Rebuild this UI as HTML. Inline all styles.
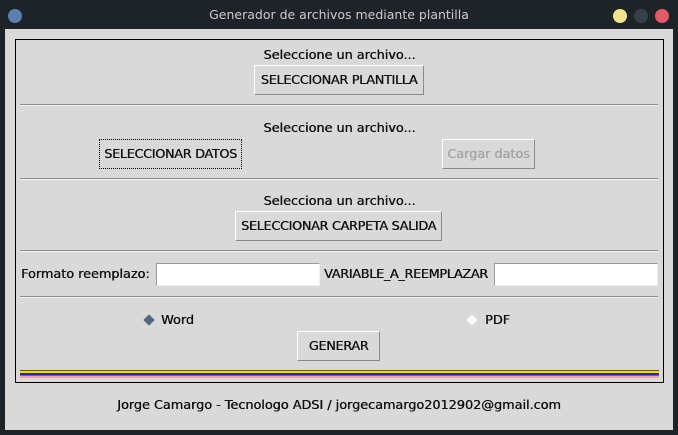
<!DOCTYPE html>
<html><head><meta charset="utf-8"><style>
*{margin:0;padding:0;box-sizing:border-box}
body{width:678px;height:435px;background:#1d2327;position:relative;overflow:hidden;font-family:"DejaVu Sans","Liberation Sans",sans-serif;font-size:12.8px;color:#111}
.a{position:absolute}
.t{position:absolute;white-space:nowrap;text-align:center;text-shadow:0.4px 0 0 #111}
.btn{position:absolute;background:#d9d9d9;border:1px solid;border-color:#fff #8a8a8a #8a8a8a #fff;display:flex;align-items:center;justify-content:center;white-space:nowrap;font-size:12.8px;letter-spacing:-0.3px;text-shadow:0.4px 0 0 #111}
.sep{position:absolute;left:20px;width:638px;height:2px;border-top:1px solid #8c8c8c;border-bottom:1px solid #f0f0f0}
.in{position:absolute;background:#fff;border:1px solid;border-color:#9a9a9a #eee #eee #9a9a9a}
</style></head><body>
<div class="a" style="left:8px;top:9px;width:14px;height:14px;border-radius:50%;background:#5b7fae"></div>
<div class="a" style="left:0;width:678px;top:7px;color:#c8ccd0;font-size:12.5px;text-align:center;white-space:nowrap">Generador de archivos mediante plantilla</div>
<div class="a" style="left:613px;top:9px;width:14px;height:14px;border-radius:50%;background:#efe48c"></div>
<div class="a" style="left:634px;top:9px;width:14px;height:14px;border-radius:50%;background:#3a3f4b"></div>
<div class="a" style="left:655px;top:9px;width:14px;height:14px;border-radius:50%;background:#e45b68"></div>

<div class="a" style="left:5px;top:29px;width:668px;height:401px;background:#d9d9d9"></div>
<div class="a" style="left:15px;top:39px;width:649px;height:344px;border:1px solid #000"></div>

<div class="t" style="left:15px;width:649px;top:48px">Seleccione un archivo...</div>
<div class="btn" style="left:254px;top:65px;width:170px;height:30px">SELECCIONAR PLANTILLA</div>
<div class="sep" style="top:104px"></div>

<div class="t" style="left:15px;width:649px;top:121px">Seleccione un archivo...</div>
<div class="btn" style="left:99px;top:139px;width:143px;height:30px;border:1px dotted #000">SELECCIONAR DATOS</div>
<div class="btn" style="left:442px;top:139px;width:93px;height:30px;color:#a3a3a3;text-shadow:0.4px 0 0 #a3a3a3;letter-spacing:0">Cargar datos</div>
<div class="sep" style="top:178px"></div>

<div class="t" style="left:15px;width:649px;top:194px">Selecciona un archivo...</div>
<div class="btn" style="left:235px;top:211px;width:207px;height:30px">SELECCIONAR CARPETA SALIDA</div>
<div class="sep" style="top:250px"></div>

<div class="t" style="left:21px;top:267px;text-align:left">Formato reemplazo:</div>
<div class="in" style="left:156px;top:263px;width:164px;height:23px"></div>
<div class="t" style="left:324px;top:267px;text-align:left;letter-spacing:-0.3px">VARIABLE_A_REEMPLAZAR</div>
<div class="in" style="left:494px;top:263px;width:164px;height:23px"></div>
<div class="sep" style="top:296px"></div>

<div class="a" style="left:145px;top:316px;width:8px;height:8px;background:#52667e;transform:rotate(45deg)"></div>
<div class="t" style="left:161px;top:313px;text-align:left">Word</div>
<div class="a" style="left:468px;top:316px;width:8px;height:8px;background:#fff;transform:rotate(45deg)"></div>
<div class="t" style="left:485px;top:313px;text-align:left">PDF</div>
<div class="btn" style="left:297px;top:331px;width:83px;height:30px">GENERAR</div>

<div class="a" style="left:20px;top:370px;width:639px;height:1px;background:#5a5a00"></div>
<div class="a" style="left:20px;top:371px;width:639px;height:2px;background:#e8e000"></div>
<div class="a" style="left:20px;top:373px;width:639px;height:1px;background:#333"></div>
<div class="a" style="left:20px;top:374px;width:639px;height:1px;background:#2020d0"></div>
<div class="a" style="left:20px;top:375px;width:639px;height:1px;background:#e04040"></div>
<div class="a" style="left:20px;top:376px;width:639px;height:2px;background:#f0a0a0"></div>

<div class="t" style="left:5px;width:668px;top:398px">Jorge Camargo - Tecnologo ADSI / jorgecamargo2012902@gmail.com</div>
</body></html>
